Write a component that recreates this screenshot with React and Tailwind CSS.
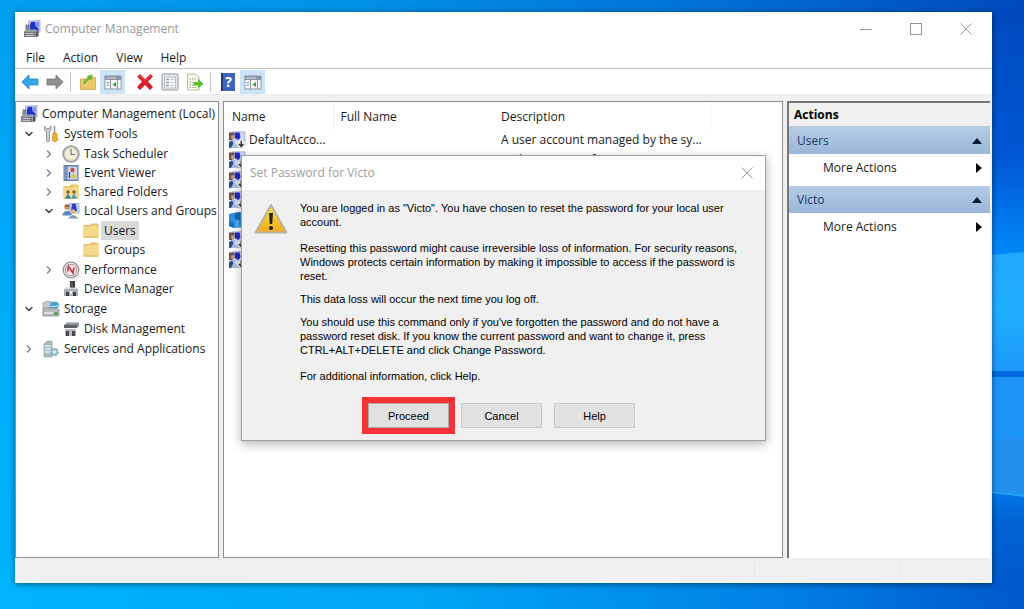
import { ChevronDown, ChevronRight } from 'lucide-react';

const ComputerIcon = () => (
  <svg viewBox="0 0 18 18" className="h-[18px] w-[18px] shrink-0" aria-hidden="true">
    <path d="M5.500 1 L17 .5 V12 H5.500 Z" fill="#c9d0e8" stroke="#a3abc4" strokeWidth=".8" />
    <path d="M7 2 L16 1.700 V10.500 H7 Z" fill="#a9b9f2" />
    <path d="M8 2 L12 1.800 L12.500 6 L15.500 8.500 V10.500 H7 V5 Z" fill="#2530cc" />
    <path d="M12.500 2 L16 1.800 V7.500 L13 5.500 Z" fill="#7f93ee" />
    <path d="M2.500 4.500 H6.500 V10 H2.500 Z" fill="#7b8590" />
    <path d="M1 11 L4 9.500 H13 L14.500 11.500 V17 H1 Z" fill="#9a9da3" />
    <path d="M1 12 H12 V17 H1 Z" fill="#777b82" />
    <path d="M2.500 13.500 H10.500 M2.500 15.500 H10.500" stroke="#c2c5cb" />
    <path d="M13 11.500 L15.500 11 V16 L13 17 Z" fill="#4d525b" />
  </svg>
);

const ToolsIcon = () => (
  <svg viewBox="0 0 16 18" className="h-[18px] w-4" aria-hidden="true">
    <path d="M1.500 1 V5 L3.500 7 V16 Q5 18 6.500 16 V7 L8 5 V1 L6 3.500 H3.500 Z" fill="#c9ccd0" stroke="#85898f" strokeWidth=".8" />
    <path d="M11.500 1 V8" stroke="#8f9399" strokeWidth="1.500" />
    <path d="M10 8 H13.500 L14.500 15 Q12 18.500 9.500 15 Z" fill="#f0b429" stroke="#b98112" strokeWidth=".7" />
  </svg>
);

const ClockIcon = () => (
  <svg viewBox="0 0 18 18" className="h-[18px] w-[18px]" aria-hidden="true">
    <circle cx="9" cy="9" r="7.800" fill="#efe7cf" stroke="#9b9ea3" strokeWidth="1.800" />
    <circle cx="9" cy="9" r="6" fill="#f5ecd2" stroke="#cfcdc2" strokeWidth=".6" />
    <path d="M9 4 V9.500 H13" fill="none" stroke="#6d7b92" strokeWidth="1.200" />
  </svg>
);

const EventIcon = () => (
  <svg viewBox="0 0 16 16" className="h-4 w-4" aria-hidden="true">
    <rect x="1" y=".5" width="14" height="15" fill="#8ea5cf" stroke="#6d7ea3" />
    <path d="M3 1 V15" stroke="#4c5c80" strokeDasharray="1.500 1" />
    <rect x="5" y="2" width="9" height="12" fill="#c9d8f0" />
    <circle cx="9.500" cy="5" r="2.200" fill="#d8483f" />
    <path d="M10.500 7 L13.500 13 H8 Z" fill="#f0c02f" />
    <path d="M6.500 7 V13" stroke="#2c55b8" strokeWidth="1.500" />
  </svg>
);

const FolderIcon = ({ shared }) => (
  <svg viewBox="0 0 16 16" className="h-4 w-4" aria-hidden="true">
    <path d="M.5 2 H6.500 L8 .5 H14.500 L15.500 1.500 V14.500 H.5 Z" fill="#e6c266" />
    <path d="M.5 3.500 H8.500 L10 2.500 H15.500 V14.500 H.5 Z" fill="#f5d98a" />
    <path d="M1 14 H15" stroke="#d9b256" />
    {shared && (
      <g>
        <circle cx="5" cy="8" r="1.800" fill="#8a5f38" />
        <circle cx="11" cy="8" r="1.800" fill="#8a5f38" />
        <path d="M2 14.500 L5 9.500 L8 14.500 Z" fill="#2f7f9e" />
        <path d="M8 14.500 L11 9.500 L14 14.500 Z" fill="#3aa0c4" />
      </g>
    )}
  </svg>
);

const GroupIcon = () => (
  <svg viewBox="0 0 18 18" className="h-[18px] w-[18px]" aria-hidden="true">
    <path d="M7 1.500 H17 V11 H7 Z" fill="#c5cff0" stroke="#9aa5c4" strokeWidth=".7" />
    <path d="M10 2 L13.500 1.500 L15 9 H9 Z" fill="#2f3dcc" />
    <circle cx="5" cy="5" r="2.700" fill="#c79063" />
    <path d="M2.300 4.500 Q5 .5 7.700 4.500 Z" fill="#7a5a34" />
    <path d="M.5 12 Q5 5.500 9.500 12 V13.500 H.5 Z" fill="#5a8ac6" />
    <circle cx="11" cy="9.500" r="2.200" fill="#d9b376" />
    <path d="M6 16.500 Q11 9.500 16.500 16.500 Z" fill="#7f9bb3" />
  </svg>
);

const PerformanceIcon = () => (
  <svg viewBox="0 0 18 18" className="h-[18px] w-[18px]" aria-hidden="true">
    <circle cx="9" cy="9" r="7.800" fill="#fff" stroke="#8f9297" strokeWidth="1.300" />
    <circle cx="9" cy="9" r="5.800" fill="#fbeeee" stroke="#a9888a" strokeWidth="1" />
    <path d="M5.500 10.500 L6.500 5.500 L11 12 L12 6.500" fill="none" stroke="#d03a44" strokeWidth="1.700" />
  </svg>
);

const DeviceIcon = () => (
  <svg viewBox="0 0 16 18" className="h-[18px] w-4" aria-hidden="true">
    <path d="M7 1 H12 V8 H7 Z" fill="#35383c" />
    <path d="M9 2 V7" stroke="#888" />
    <path d="M1 9 H15 V16 H1 Z" fill="#aab0b5" />
    <path d="M1 9 L3 7.500 H14 L15 9 Z" fill="#d4d8db" />
    <path d="M3 12 H6 V16 H3 Z M10 12 H13 V16 H10 Z" fill="#3f4347" />
    <path d="M7 11 H9 V14 H7 Z" fill="#fff" />
  </svg>
);

const StorageIcon = () => (
  <svg viewBox="0 0 18 18" className="h-[18px] w-[18px]" aria-hidden="true">
    <path d="M1 3 L4 1.500 H9 V10 H1 Z" fill="#c3c8cc" stroke="#8d9297" strokeWidth=".7" />
    <ellipse cx="12.500" cy="5" rx="4.500" ry="3.500" fill="#4fa4cf" />
    <path d="M9 6 Q12 8 16 5.500" stroke="#d6effb" fill="none" />
    <path d="M1 10 L3 8 H15 L17 10 V16 H1 Z" fill="#b4b9bd" stroke="#7e8388" strokeWidth=".7" />
    <path d="M2 13 H11" stroke="#eef0f1" strokeWidth="1.500" />
    <circle cx="14" cy="13.500" r="1.500" fill="#3d9b35" />
  </svg>
);

const DiskIcon = () => (
  <svg viewBox="0 0 18 16" className="h-4 w-[18px]" aria-hidden="true">
    <path d="M2 4 L5 1.500 H17 V5 L15 7 H2 Z" fill="#909599" />
    <path d="M2 4 H15 V7 H2 Z" fill="#5d6164" />
    <path d="M3 8 H14 V15 H3 Z" fill="#b8bcc0" />
    <path d="M4 10 H7 V15 H4 Z M10 10 H13 V15 H10 Z" fill="#45494d" />
  </svg>
);

const ServicesIcon = () => (
  <svg viewBox="0 0 16 18" className="h-[18px] w-4" aria-hidden="true">
    <path d="M1 4 L4 1 H9 V17 H1 Z" fill="#a9bcc2" stroke="#8fa3aa" strokeWidth=".7" />
    <path d="M2 6 H8 M2 9 H8 M2 12 H8" stroke="#e4f0f2" strokeWidth="1.300" />
    <circle cx="11.500" cy="12" r="3.500" fill="#a4cfd8" stroke="#6f9aa5" strokeWidth="1.200" strokeDasharray="2 1" />
    <circle cx="11.500" cy="12" r="1.300" fill="#f2fafb" />
  </svg>
);

const UserIcon = ({ variant }) => {
  if (variant === 'plain') {
    return (
      <svg viewBox="0 0 18 18" className="h-[18px] w-[18px] shrink-0" aria-hidden="true">
        <path d="M1 3 L5 2 L12 1 L17 4 V16 L6 17 L1 15 Z" fill="#2b8fe0" />
        <path d="M7 2 L12 1 V9 L7 8 Z" fill="#1467b8" />
        <path d="M1 10 L6 12 V17 L1 15 Z" fill="#1a73c4" />
        <path d="M7 10 L11 9 V16 H7 Z" fill="#4fa9ee" />
      </svg>
    );
  }
  return (
    <svg viewBox="0 0 18 18" className="h-[18px] w-[18px] shrink-0" aria-hidden="true">
      <path d="M4 .8 H17 V14 H4 Z" fill="#cfd8f4" stroke="#a0aac8" strokeWidth=".8" />
      <path d="M6.500 1.500 H11.500 L12.500 6 L10.500 9 L6.500 7 Z" fill="#2329ba" />
      <path d="M1 1.500 H6 V5 L4 9 H1 Z" fill="#6c5145" />
      <circle cx="4.800" cy="6" r="2" fill="#c99a78" />
      <path d="M1 17 V11 Q5 6.500 11 11 V17 Z" fill="#a9bfe6" />
      <path d="M1 11 L4 9.500 L5.500 12 L3 17 H1 Z" fill="#3a4c80" />
      <path d="M6 11 L10 9 L12 12 L8 14 Z" fill="#dbe6fa" />
      <circle cx="13.200" cy="12.800" r="4.200" fill="#f0f1f2" stroke="#c3c6cb" strokeWidth=".6" />
      <path d="M13.200 9.800 V15 M11 13 L13.200 15.500 L15.400 13" fill="none" stroke="#2b2b2b" strokeWidth="1.300" />
    </svg>
  );
};

const WarningIcon = () => (
  <svg viewBox="0 0 34 32" className="mt-[2px] h-8 w-[34px] shrink-0" aria-hidden="true">
    <defs>
      <linearGradient id="warn" x1="0" y1="0" x2="0" y2="1">
        <stop offset="0" stopColor="#f3e04a" />
        <stop offset="1" stopColor="#f3ab1c" />
      </linearGradient>
    </defs>
    <path d="M17 2 L32.500 29.500 H1.500 Z" fill="url(#warn)" stroke="#b5b1a6" strokeWidth="1.800" strokeLinejoin="round" />
    <path d="M15 10 H19 L18.200 21 H15.800 Z" fill="#222" />
    <circle cx="17" cy="25" r="2.100" fill="#222" />
  </svg>
);

const BackIcon = () => (
  <svg viewBox="0 0 18 18" className="h-[18px] w-[18px]" aria-hidden="true">
    <path d="M.8 9 L8 2 V6 H17 V12 H8 V16 Z" fill="#35a5e4" stroke="#2585c2" strokeWidth=".8" />
  </svg>
);

const ForwardIcon = () => (
  <svg viewBox="0 0 18 18" className="h-[18px] w-[18px]" aria-hidden="true">
    <path d="M17.200 9 L10 2 V6 H1 V12 H10 V16 Z" fill="#8f8f8f" stroke="#757575" strokeWidth=".8" />
  </svg>
);

const UpFolderIcon = () => (
  <svg viewBox="0 0 18 18" className="h-[18px] w-[18px]" aria-hidden="true">
    <path d="M1.500 6 H7 L8.500 4.500 H16.500 V16.500 H1.500 Z" fill="#ecc766" stroke="#c9a44c" strokeWidth=".8" />
    <path d="M4 11 Q5 6 9 5 L8 3 L14 1.500 L12.500 7.500 L11 6.500 Q7.500 7.500 6.500 11 Z" fill="#6db83a" />
  </svg>
);

const PaneIcon = () => (
  <svg viewBox="0 0 18 18" className="h-[18px] w-[18px]" aria-hidden="true">
    <rect x=".9" y="3" width="16.200" height="13" fill="#f5f6f7" stroke="#8b929c" strokeWidth=".9" />
    <path d="M1 3 H17 V7 H1 Z" fill="#8c95a3" />
    <path d="M2 5 H12" stroke="#dde1e8" />
    <path d="M6.500 7 V16 M13.500 7 V16" stroke="#8b929c" />
    <path d="M2.500 9.500 H5 M2.500 12 H5" stroke="#8b929c" />
    <path d="M8.500 11.500 L12 9 V14 Z" fill="#33a02c" />
  </svg>
);

const DeleteIcon = () => (
  <svg viewBox="0 0 18 18" className="h-[18px] w-[18px]" aria-hidden="true">
    <path d="M1 3.500 L4 1 L9 6 L14.500 1 L17 3.500 L12 8.500 L17 14 L14 17 L9 12 L4 17 L1 14 L6 8.500 Z" fill="#d9202a" />
    <path d="M2.500 3.500 L4 2.500 L9 7.500 L14.500 2.500" fill="none" stroke="#f0676c" strokeWidth=".8" />
  </svg>
);

const PropertiesIcon = () => (
  <svg viewBox="0 0 18 18" className="h-[18px] w-[18px]" aria-hidden="true">
    <rect x="1" y="1" width="16" height="16" rx="1" fill="#e8ecef" stroke="#8f979e" />
    <rect x="3.500" y="4" width="11" height="11" fill="#f8fafb" stroke="#a5aeb5" strokeWidth=".8" />
    <path d="M5 6.500 H8 M5 9.500 H8 M5 12.500 H8" stroke="#8aa0ae" strokeWidth="1.300" />
    <path d="M9.500 6.500 H13 M9.500 9.500 H13 M9.500 12.500 H13" stroke="#b3bec6" />
  </svg>
);

const ExportIcon = () => (
  <svg viewBox="0 0 18 18" className="h-[18px] w-[18px]" aria-hidden="true">
    <path d="M1.500 1 H9.500 L13 4.500 V17 H1.500 Z" fill="#fbf9ea" stroke="#a8a48e" strokeWidth=".8" />
    <path d="M3.500 6 H10 M3.500 9 H8 M3.500 12 H8 M3.500 14.500 H10" stroke="#9a9c88" strokeDasharray="1.500 1" />
    <path d="M7.500 9 H12 V6 L17.500 10.800 L12 15.500 V12.500 H7.500 Z" fill="#5cbb30" />
  </svg>
);

const HelpIcon = () => (
  <span className="flex h-[18px] w-[14px] items-center justify-center border-l-2 border-[#24397a] bg-[#3f63c2] text-[14px] leading-none font-bold text-white">
    ?
  </span>
);

const CloseGlyph = () => (
  <svg viewBox="0 0 12 12" className="h-3 w-3" aria-hidden="true">
    <path d="M.5 .5 L11.500 11.500 M11.500 .5 L.5 11.500" stroke="currentColor" fill="none" />
  </svg>
);

const tree = [
  {
    label: 'System Tools',
    icon: <ToolsIcon />,
    state: 'open',
    children: [
      { label: 'Task Scheduler', icon: <ClockIcon />, state: 'closed' },
      { label: 'Event Viewer', icon: <EventIcon />, state: 'closed' },
      { label: 'Shared Folders', icon: <FolderIcon shared />, state: 'closed' },
      {
        label: 'Local Users and Groups',
        icon: <GroupIcon />,
        state: 'open',
        children: [
          { label: 'Users', icon: <FolderIcon />, selected: true },
          { label: 'Groups', icon: <FolderIcon /> },
        ],
      },
      { label: 'Performance', icon: <PerformanceIcon />, state: 'closed' },
      { label: 'Device Manager', icon: <DeviceIcon /> },
    ],
  },
  {
    label: 'Storage',
    icon: <StorageIcon />,
    state: 'open',
    children: [{ label: 'Disk Management', icon: <DiskIcon /> }],
  },
  { label: 'Services and Applications', icon: <ServicesIcon />, state: 'closed' },
];

const users = [
  { name: 'DefaultAcco...', description: 'A user account managed by the sy...' },
  { name: 'Guest', description: 'Built-in account for guest access...' },
  { name: '', description: '' },
  { name: '', description: '' },
  { name: '', description: '', variant: 'plain' },
  { name: '', description: '' },
  { name: '', description: '' },
];

const loginNote =
  'You are logged in as "Victo". You have chosen to reset the password for your local user account.';

const warnings = [
  'Resetting this password might cause irreversible loss of information. For security reasons, Windows protects certain information by making it impossible to access if the password is reset.',
  'This data loss will occur the next time you log off.',
  "You should use this command only if you've forgotten the password and do not have a password reset disk. If you know the current password and want to change it, press CTRL+ALT+DELETE and click Change Password.",
];

const TreeNode = ({ node }) => (
  <li>
    <div className="flex h-[19px] items-center">
      <span className="flex w-5 shrink-0 pl-px text-[#888]">
        {node.state === 'open' && <ChevronDown className="h-3 w-3 text-[#444]" strokeWidth={3} />}
        {node.state === 'closed' && <ChevronRight className="h-3 w-3" strokeWidth={3} />}
      </span>
      <span className="flex w-[18px] shrink-0 justify-center">{node.icon}</span>
      <span className={`ml-px px-[3px] leading-[19px] whitespace-nowrap ${node.selected ? 'bg-[#d9d9d9]' : ''}`}>
        {node.label}
      </span>
    </div>
    {node.children && (
      <ul className="py-px pl-5">
        {node.children.map((child) => (
          <TreeNode key={child.label} node={child} />
        ))}
      </ul>
    )}
  </li>
);

const ToolButton = ({ label, active, children }) => (
  <button
    aria-label={label}
    className={`flex h-6 w-[25px] items-center justify-center ${active ? 'bg-[#cce4f7]' : ''}`}
  >
    {children}
  </button>
);

const Divider = () => <span className="mr-1 ml-[3px] h-5 w-px bg-[#c4c4c4]" />;

const ActionGroup = ({ title }) => (
  <section>
    <h3 className="flex h-[27px] items-center justify-between bg-linear-to-b from-[#b6cce6] to-[#9ab6d9] px-2 text-[#1e3a5f]">
      {title}
      <svg viewBox="0 0 10 6" className="h-[6px] w-[10px]" aria-hidden="true">
        <path d="M0 6 L5 0 L10 6 Z" fill="#0b1a2e" />
      </svg>
    </h3>
    <button className="flex h-8 w-full items-center justify-between pr-2 pb-1 pl-[34px]">
      More Actions
      <svg viewBox="0 0 6 10" className="h-[10px] w-[6px]" aria-hidden="true">
        <path d="M0 0 L6 5 L0 10 Z" fill="#000" />
      </svg>
    </button>
  </section>
);

const Wallpaper = () => (
  <svg
    viewBox="0 0 1024 609"
    preserveAspectRatio="none"
    className="absolute inset-0 -z-10 h-full w-full"
    aria-hidden="true"
  >
    <defs>
      <linearGradient id="base" x1="0" y1="0" x2="1" y2="0">
        <stop offset="0" stopColor="#009ff0" />
        <stop offset=".35" stopColor="#0092e6" />
        <stop offset=".7" stopColor="#0070d8" />
        <stop offset="1" stopColor="#0049bd" />
      </linearGradient>
      <linearGradient id="floor" x1="0" y1="0" x2="1" y2="0">
        <stop offset="0" stopColor="#00b4ff" />
        <stop offset=".4" stopColor="#00a6f6" />
        <stop offset=".75" stopColor="#0082e6" />
        <stop offset="1" stopColor="#0058cc" />
      </linearGradient>
      <linearGradient id="side" x1="0" y1="0" x2="0" y2="1">
        <stop offset="0" stopColor="#009ff0" />
        <stop offset=".6" stopColor="#00aefc" />
        <stop offset="1" stopColor="#00b4ff" />
      </linearGradient>
      <linearGradient id="edge" x1="0" y1="0" x2="0" y2="1">
        <stop offset="0" stopColor="#0049bd" />
        <stop offset=".6" stopColor="#0058d4" />
        <stop offset="1" stopColor="#008cfa" />
      </linearGradient>
      <linearGradient id="pane" x1="0" y1="0" x2="0" y2="1">
        <stop offset="0" stopColor="#22a6ff" />
        <stop offset=".5" stopColor="#1fafff" />
        <stop offset="1" stopColor="#1c98fa" />
      </linearGradient>
      <linearGradient id="low" x1="0" y1="0" x2="0" y2="1">
        <stop offset="0" stopColor="#0078e8" />
        <stop offset=".35" stopColor="#0062d2" />
        <stop offset="1" stopColor="#005acb" />
      </linearGradient>
    </defs>
    <path d="M0 0 H1024 V300 H0 Z" fill="url(#base)" />
    <path d="M0 300 H1024 V609 H0 Z" fill="url(#floor)" />
    <path d="M0 0 H20 V609 H0 Z" fill="url(#side)" />
    <path d="M980 12 H1024 V260 H980 Z" fill="url(#edge)" />
    <path d="M980 256 L1024 252 V371 H980 Z" fill="url(#pane)" />
    <path d="M980 371 H1024 V377 H980 Z" fill="#0068dc" />
    <path d="M980 377 H1024 V496 L980 490 Z" fill="#1c94f8" />
    <path d="M980 444 Q1000 438 1024 438 V496 L980 490 Z" fill="#2190ee" />
    <path d="M980 490 L1024 496 V585 H980 Z" fill="url(#low)" />
    <path d="M980 491 L1024 496" stroke="#2aa6f8" strokeWidth="1.500" />
  </svg>
);

const PasswordDialog = () => (
  <div
    role="dialog"
    aria-label="Set Password for Victo"
    className="absolute top-[143px] left-[226px] w-[525px] border border-[#9f9f9f] bg-[#f0f0f0] pb-3 font-['Liberation_Sans',Arial,sans-serif] text-[11px] leading-[14px] text-black shadow-[0_3px_10px_rgba(0,0,0,0.3)]"
  >
    <header className="flex h-[34px] items-center justify-between bg-white pr-3 pl-2">
      <h2 className="font-['Open_Sans','Noto_Sans',sans-serif] text-[12px] text-[#a0a0a0]">Set Password for Victo</h2>
      <button aria-label="Close dialog" className="text-[#999]">
        <CloseGlyph />
      </button>
    </header>
    <div className="flex gap-3 pt-[11px] pr-4 pl-3">
      <WarningIcon />
      <div className="flex flex-col gap-3">
        <p>{loginNote}</p>
        <div className="flex flex-col gap-[9px]">
          {warnings.map((text) => (
            <p key={text}>{text}</p>
          ))}
        </div>
        <p>For additional information, click Help.</p>
      </div>
    </div>
    <footer className="mt-5 flex gap-3 pl-[126px]">
      <button className="h-[25px] w-[81px] border border-[#adadad] bg-[#e1e1e1] outline-[6px] outline-[#f53237]">
        Proceed
      </button>
      <button className="h-[25px] w-[81px] border border-[#c8c8c8] bg-[#e1e1e1]">Cancel</button>
      <button className="h-[25px] w-[81px] border border-[#c8c8c8] bg-[#e1e1e1]">Help</button>
    </footer>
  </div>
);

export default function App() {
  return (
    <div className="relative isolate flex min-h-screen flex-col overflow-hidden pt-3 pr-8 pb-[26px] pl-[15px] font-['Open_Sans','Noto_Sans',sans-serif] text-[12px] text-[#1a1a1a]">
      <Wallpaper />
      <main className="relative flex flex-1 flex-col bg-[#f0f0f0] shadow-[0_1px_6px_rgba(0,0,0,0.5)]">
        <header className="flex h-[34px] items-center justify-between bg-white pr-5 pl-2 text-[#999]">
          <div className="flex items-center gap-1">
            <ComputerIcon />
            <h1>Computer Management</h1>
          </div>
          <div className="flex items-center gap-[38px]">
            <button aria-label="Minimize" className="h-3 w-3">
              <span className="block h-px bg-[#999]" />
            </button>
            <button aria-label="Maximize" className="h-3 w-3 border border-[#999]" />
            <button aria-label="Close">
              <CloseGlyph />
            </button>
          </div>
        </header>

        <nav className="flex h-[23px] items-center gap-[18px] border-b border-[#c4c4c4] bg-white pt-px pl-[11px]">
          <button>File</button>
          <button>Action</button>
          <button>View</button>
          <button>Help</button>
        </nav>

        <div className="flex h-[25px] items-center bg-white pl-[2px]">
          <ToolButton label="Back"><BackIcon /></ToolButton>
          <ToolButton label="Forward"><ForwardIcon /></ToolButton>
          <Divider />
          <ToolButton label="Up one level"><UpFolderIcon /></ToolButton>
          <ToolButton label="Show console tree" active><PaneIcon /></ToolButton>
          <div className="flex pl-[7px]">
            <ToolButton label="Delete"><DeleteIcon /></ToolButton>
            <ToolButton label="Properties"><PropertiesIcon /></ToolButton>
            <ToolButton label="Export list"><ExportIcon /></ToolButton>
          </div>
          <Divider />
          <ToolButton label="Help topics"><HelpIcon /></ToolButton>
          <ToolButton label="Show action pane" active><PaneIcon /></ToolButton>
        </div>

        <div className="mt-[7px] flex flex-1 gap-1">
          <aside className="w-[204px] shrink-0 border border-[#8e8e8e] bg-white pt-[2px]">
            <div className="flex h-[19px] items-center gap-1 pl-1 whitespace-nowrap">
              <ComputerIcon />
              Computer Management (Local)
            </div>
            <ul className="py-px pl-[6px]">
              {tree.map((node) => (
                <TreeNode key={node.label} node={node} />
              ))}
            </ul>
          </aside>

          <section className="min-w-0 flex-1 border border-[#8e8e8e] bg-white">
            <table className="w-full table-fixed text-left">
              <thead>
                <tr className="h-7">
                  <th className="w-[109px] border-r border-[#ececec] pt-[2px] pl-2 font-normal">Name</th>
                  <th className="w-[161px] pt-[2px] pl-[7px] font-normal">Full Name</th>
                  <th className="w-[216px] border-r border-[#f2f2f2] pt-[2px] pl-[7px] font-normal">Description</th>
                  <th aria-hidden="true" />
                </tr>
              </thead>
              <tbody>
                {users.map((user, i) => (
                  <tr key={i} className="h-5">
                    <td className="pl-1">
                      <span className="flex items-center gap-[3px] whitespace-nowrap">
                        <UserIcon variant={user.variant} />
                        {user.name}
                      </span>
                    </td>
                    <td />
                    <td className="pl-[7px] whitespace-nowrap">{user.description}</td>
                    <td />
                  </tr>
                ))}
              </tbody>
            </table>
          </section>

          <aside className="mr-[2px] w-[203px] shrink-0 border-t-2 border-l-2 border-[#777] bg-white">
            <h2 className="flex h-6 items-center border-b border-[#c4c4c4] bg-[#f0f0f0] pl-[5px] font-bold text-black">
              Actions
            </h2>
            <ActionGroup title="Users" />
            <ActionGroup title="Victo" />
          </aside>
        </div>

        <footer className="flex h-[25px] justify-end border-b-2 border-[#f8f8f8] pt-1 pr-[92px]">
          <span className="h-4 w-[146px] border-x border-[#e6e6e6]" />
        </footer>

        <PasswordDialog />
      </main>
    </div>
  );
}
